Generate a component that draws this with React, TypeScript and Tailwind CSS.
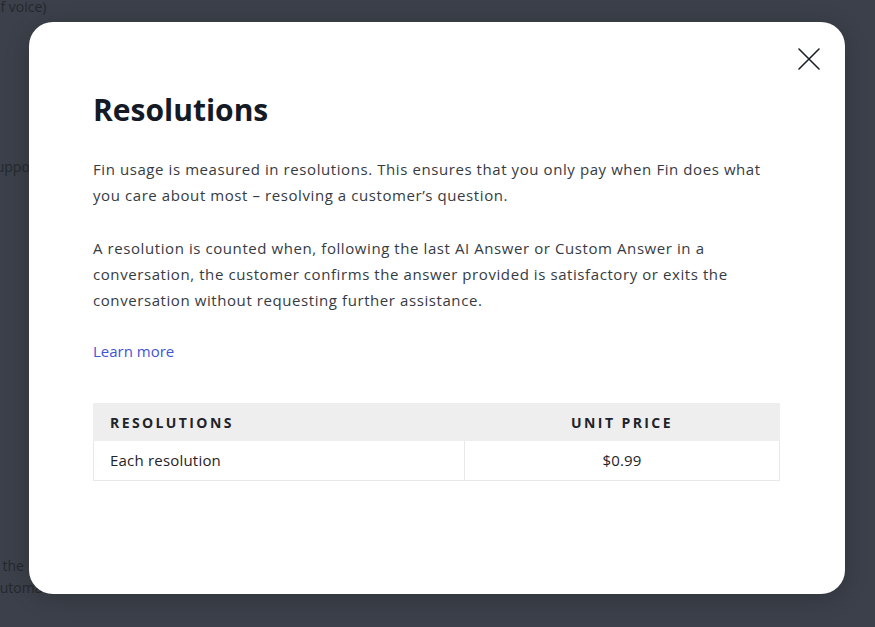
export default function App() {
  const font = { fontFamily: "'Open Sans', 'Noto Sans', sans-serif" };
  return (
    <div className="relative h-[627px] w-[875px] overflow-hidden bg-[#3b404a]" style={font}>
      {/* page behind the overlay */}
      <div className="flex h-full flex-col text-[14px] text-[#25292f]">
        <p className="-ml-[8px] -mt-[4px] leading-[22px]">of voice)</p>
        <p className="mt-[138px] -ml-[12px] leading-[22px]">Support</p>
        <p className="mt-[377px] -ml-[14px] leading-[22px]">at the</p>
        <p className="-ml-[8px] leading-[22px]">automated</p>
      </div>

      {/* modal */}
      <div className="absolute left-[29px] top-[22px] h-[572px] w-[816px] rounded-[24px] bg-white pl-[64px] pr-[65px] pt-[70px] shadow-[0_4px_24px_rgba(0,0,0,0.2)]">
        <button className="absolute right-[24px] top-[25px] flex h-[24px] w-[24px] items-center justify-center text-[#1b1f26]">
          <svg width="22" height="22" viewBox="0 0 22 22" fill="none" stroke="currentColor" strokeWidth="1.6" strokeLinecap="round">
            <path d="M1 1L21 21M21 1L1 21" />
          </svg>
        </button>

        <h2 className="text-[30px] font-bold leading-[36px] text-[#141a26]">Resolutions</h2>

        <div className="mt-[28px] w-[687px] text-[15px] leading-[26px] tracking-[0.58px] text-[#363b43]">
          <p>
            Fin usage is measured in resolutions. This ensures that you only pay when Fin does what you care about
            most – resolving a customer’s question.
          </p>
          <p className="mt-[27px]">
            A resolution is counted when, following the last AI Answer or Custom Answer in a conversation, the
            customer confirms the answer provided is satisfactory or exits the conversation without requesting further
            assistance.
          </p>
          <p className="mt-[25px]">
            <a className="tracking-[0px] text-[#3e55d6]">Learn more</a>
          </p>
        </div>

        <div className="mt-[39px] w-[687px] text-[15px] tracking-[0.2px] text-[#1f232a]">
          <div className="grid h-[38px] grid-cols-[371px_1fr] items-center bg-[#eeeeee]">
            <div className="pl-[17px] text-[14px] font-bold tracking-[2.4px]">RESOLUTIONS</div>
            <div className="text-center text-[14px] font-bold tracking-[2.4px]">UNIT PRICE</div>
          </div>
          <div className="grid h-[40px] grid-cols-[371px_1fr] border-x border-b border-[#e8e8e8]">
            <div className="flex items-center border-r border-[#e8e8e8] pl-[16px]">Each resolution</div>
            <div className="flex items-center justify-center">$0.99</div>
          </div>
        </div>
      </div>
    </div>
  );
}
